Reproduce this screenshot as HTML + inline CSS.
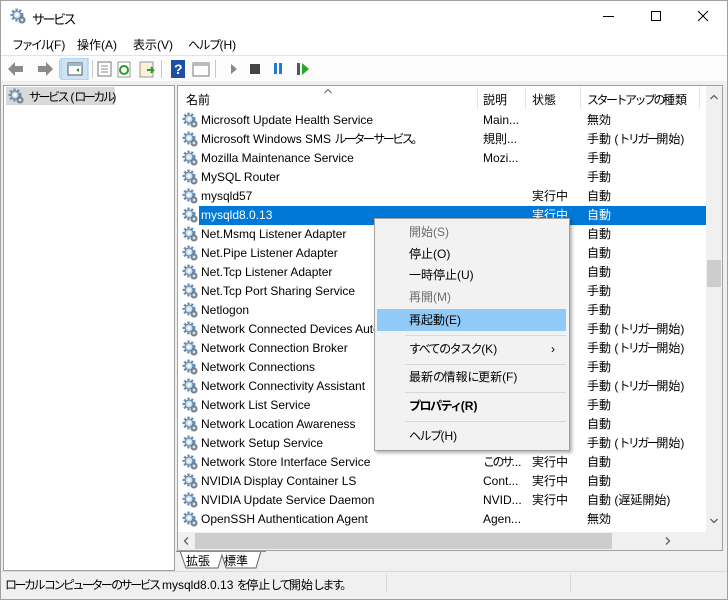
<!DOCTYPE html>
<html><head><meta charset="utf-8"><style>
*{margin:0;padding:0;box-sizing:border-box}
body{width:728px;height:600px;overflow:hidden;background:#f0f0f0;font-family:"Liberation Sans","Noto Sans CJK JP",sans-serif;font-size:12px;color:#000;position:relative}
.a{position:absolute;white-space:nowrap}
.row{position:absolute;left:179px;width:527px;height:19px;line-height:19px}
.row>span{position:absolute;top:0}
.n{left:22px}.d{left:304px}.s{left:353px}.t{left:408px}
.g{position:absolute;left:3px;top:1px}
.mi{position:absolute;left:409px;line-height:16px}
.sep{position:absolute;left:405px;width:161px;height:1px;background:#d7d7d7}
.dis{color:#6d6d6d}
.k{letter-spacing:-2.5px}
.k2{letter-spacing:-1.5px}
</style></head><body>
<svg width="0" height="0" style="position:absolute"><defs>
<g id="gear"><circle cx="7" cy="7" r="5.2" fill="none" stroke="#6a8fb5" stroke-width="2.6" stroke-dasharray="2.2 1.6"/><circle cx="7" cy="7" r="4" fill="#c8dbee" stroke="#5a7ea6" stroke-width="1"/><circle cx="7" cy="7" r="1.6" fill="#fff"/><circle cx="12" cy="12" r="3" fill="#8c9aa8" stroke="#6a7886" stroke-width="1"/><circle cx="12" cy="12" r="1" fill="#fff"/></g>
</defs></svg>
<div class="a" style="left:0;top:0;width:728px;height:600px;border:1px solid #a0a0a0"></div>
<div class="a" style="left:1px;top:1px;width:726px;height:54px;background:#fff"></div>
<svg class="a" style="left:10px;top:8px" width="18" height="18"><use href="#gear"/></svg>
<div class="a" style="left:32px;top:9px;font-size:13px"><span class="k">サービス</span></div>
<div class="a" style="left:603px;top:16px;width:11px;height:1px;background:#000"></div>
<div class="a" style="left:651px;top:11px;width:10px;height:10px;border:1px solid #000"></div>
<svg class="a" style="left:697px;top:10px" width="12" height="12"><path d="M1 1L11 11M11 1L1 11" stroke="#000" stroke-width="1"/></svg>
<div class="a" style="left:12px;top:36px"><span class="k">ファイル</span>(F)</div>
<div class="a" style="left:77px;top:36px">操作(A)</div>
<div class="a" style="left:133px;top:36px">表示(V)</div>
<div class="a" style="left:188px;top:36px"><span class="k2">ヘルプ</span>(H)</div>
<div class="a" style="left:1px;top:55px;width:726px;height:1px;background:#e3e3e3"></div>
<div class="a" style="left:1px;top:56px;width:726px;height:25px;background:#fcfcfc"></div>
<svg class="a" style="left:6px;top:58px" width="320" height="22">
<path d="M2 11L9 4V8H17V14H9V18Z" fill="#8a8a8a"/><path d="M47 11L40 4V8H32V14H40V18Z" fill="#8a8a8a"/>
<rect x="53" y="2" width="1" height="18" fill="#c8c8c8"/>
<rect x="55" y="0" width="27" height="22" fill="#cce4f7" stroke="#99c9ef"/>
<rect x="62" y="5" width="14" height="12" fill="#fff" stroke="#555"/><rect x="62" y="5" width="14" height="3" fill="#9cb6d3"/><path d="M73 10l-3 2 3 2z" fill="#2a8a2a"/>
<rect x="86" y="2" width="1" height="18" fill="#c8c8c8"/>
<rect x="92" y="4" width="13" height="14" fill="#fff" stroke="#777"/><path d="M95 8h7M95 11h7M95 14h7" stroke="#888"/>
<rect x="112" y="4" width="12" height="15" fill="#fff" stroke="#999"/><circle cx="118" cy="12" r="4" fill="none" stroke="#2c9a2c" stroke-width="2"/>
<rect x="134" y="4" width="13" height="15" fill="#f8f3d8" stroke="#999"/><path d="M141 12h6l-2-3M147 12l-2 3" stroke="#2c9a2c" stroke-width="2" fill="none"/>
<rect x="155" y="2" width="1" height="18" fill="#c8c8c8"/>
<rect x="165" y="2" width="14" height="18" fill="#1c4fa8"/><text x="168" y="16" fill="#fff" font-size="14" font-weight="bold" font-family="Liberation Sans">?</text>
<rect x="187" y="5" width="16" height="13" fill="#fff" stroke="#777"/><rect x="187" y="5" width="16" height="3" fill="#bbb"/>
<rect x="209" y="2" width="1" height="18" fill="#c8c8c8"/>
<path d="M225 6l6 5-6 5z" fill="#888"/>
<rect x="244" y="6" width="10" height="10" fill="#444"/>
<rect x="268" y="5" width="3" height="11" fill="#1e7bd6"/><rect x="273" y="5" width="3" height="11" fill="#1e7bd6"/>
<rect x="291" y="5" width="3" height="12" fill="#555"/><path d="M296 5l7 6-7 6z" fill="#28a828"/>
</svg>
<div class="a" style="left:3px;top:85px;width:172px;height:486px;background:#fff;border:1px solid #a0a0a0"></div>
<div class="a" style="left:6px;top:87px;width:109px;height:18px;background:#d9d9d9"></div>
<svg class="a" style="left:8px;top:88px" width="17" height="17"><use href="#gear"/></svg>
<div class="a" style="left:29px;top:88px"><span class="k">サービス</span> (<span class="k">ローカル</span>)</div>
<div class="a" style="left:177px;top:85px;width:546px;height:466px;background:#fff;border:1px solid #a0a0a0"></div>
<div class="a" style="left:186px;top:91px">名前</div>
<svg class="a" style="left:324px;top:88px" width="8" height="6"><path d="M0.5 5L4 1.5L7.5 5" stroke="#666" fill="none"/></svg>
<div class="a" style="left:477px;top:87px;width:1px;height:22px;background:#e5e5e5"></div>
<div class="a" style="left:525px;top:87px;width:1px;height:22px;background:#e5e5e5"></div>
<div class="a" style="left:580px;top:87px;width:1px;height:22px;background:#e5e5e5"></div>
<div class="a" style="left:699px;top:87px;width:1px;height:22px;background:#e5e5e5"></div>
<div class="a" style="left:483px;top:91px">説明</div>
<div class="a" style="left:532px;top:91px">状態</div>
<div class="a" style="left:587px;top:91px"><span class="k">スタートアップの</span>種類</div>
<div class="a" style="left:706px;top:86px;width:16px;height:446px;background:#f0f0f0"></div>
<svg class="a" style="left:710px;top:94px" width="8" height="6"><path d="M0.5 5L4 1.5L7.5 5" stroke="#606060" stroke-width="1.3" fill="none"/></svg>
<div class="a" style="left:707px;top:260px;width:14px;height:27px;background:#cdcdcd"></div>
<svg class="a" style="left:710px;top:518px" width="8" height="6"><path d="M0.5 1L4 4.5L7.5 1" stroke="#606060" stroke-width="1.3" fill="none"/></svg>
<div class="row" style="top:111px"><svg class="g" width="16" height="16"><use href="#gear"/></svg><span class="n">Microsoft Update Health Service</span><span class="d">Main...</span><span class="t">無効</span></div>
<div class="row" style="top:130px"><svg class="g" width="16" height="16"><use href="#gear"/></svg><span class="n">Microsoft Windows SMS <span class="k">ルーター サービス。</span></span><span class="d">規則...</span><span class="t">手動 (<span class="k">トリガー</span>開始)</span></div>
<div class="row" style="top:149px"><svg class="g" width="16" height="16"><use href="#gear"/></svg><span class="n">Mozilla Maintenance Service</span><span class="d">Mozi...</span><span class="t">手動</span></div>
<div class="row" style="top:168px"><svg class="g" width="16" height="16"><use href="#gear"/></svg><span class="n">MySQL Router</span><span class="t">手動</span></div>
<div class="row" style="top:187px"><svg class="g" width="16" height="16"><use href="#gear"/></svg><span class="n">mysqld57</span><span class="s">実行中</span><span class="t">自動</span></div>
<div class="a" style="left:199px;top:206px;width:507px;height:19px;background:#0078d7"></div>
<div class="row" style="top:206px;color:#fff"><svg class="g" width="16" height="16"><use href="#gear"/></svg><span class="n">mysqld8.0.13</span><span class="s">実行中</span><span class="t">自動</span></div>
<div class="row" style="top:225px"><svg class="g" width="16" height="16"><use href="#gear"/></svg><span class="n">Net.Msmq Listener Adapter</span><span class="t">自動</span></div>
<div class="row" style="top:244px"><svg class="g" width="16" height="16"><use href="#gear"/></svg><span class="n">Net.Pipe Listener Adapter</span><span class="t">自動</span></div>
<div class="row" style="top:263px"><svg class="g" width="16" height="16"><use href="#gear"/></svg><span class="n">Net.Tcp Listener Adapter</span><span class="t">自動</span></div>
<div class="row" style="top:282px"><svg class="g" width="16" height="16"><use href="#gear"/></svg><span class="n">Net.Tcp Port Sharing Service</span><span class="t">手動</span></div>
<div class="row" style="top:301px"><svg class="g" width="16" height="16"><use href="#gear"/></svg><span class="n">Netlogon</span><span class="t">手動</span></div>
<div class="row" style="top:320px"><svg class="g" width="16" height="16"><use href="#gear"/></svg><span class="n">Network Connected Devices Auto-Setup</span><span class="t">手動 (<span class="k">トリガー</span>開始)</span></div>
<div class="row" style="top:339px"><svg class="g" width="16" height="16"><use href="#gear"/></svg><span class="n">Network Connection Broker</span><span class="t">手動 (<span class="k">トリガー</span>開始)</span></div>
<div class="row" style="top:358px"><svg class="g" width="16" height="16"><use href="#gear"/></svg><span class="n">Network Connections</span><span class="t">手動</span></div>
<div class="row" style="top:377px"><svg class="g" width="16" height="16"><use href="#gear"/></svg><span class="n">Network Connectivity Assistant</span><span class="t">手動 (<span class="k">トリガー</span>開始)</span></div>
<div class="row" style="top:396px"><svg class="g" width="16" height="16"><use href="#gear"/></svg><span class="n">Network List Service</span><span class="t">手動</span></div>
<div class="row" style="top:415px"><svg class="g" width="16" height="16"><use href="#gear"/></svg><span class="n">Network Location Awareness</span><span class="t">自動</span></div>
<div class="row" style="top:434px"><svg class="g" width="16" height="16"><use href="#gear"/></svg><span class="n">Network Setup Service</span><span class="t">手動 (<span class="k">トリガー</span>開始)</span></div>
<div class="row" style="top:453px"><svg class="g" width="16" height="16"><use href="#gear"/></svg><span class="n">Network Store Interface Service</span><span class="d"><span class="k">このサ</span>...</span><span class="s">実行中</span><span class="t">自動</span></div>
<div class="row" style="top:472px"><svg class="g" width="16" height="16"><use href="#gear"/></svg><span class="n">NVIDIA Display Container LS</span><span class="d">Cont...</span><span class="s">実行中</span><span class="t">自動</span></div>
<div class="row" style="top:491px"><svg class="g" width="16" height="16"><use href="#gear"/></svg><span class="n">NVIDIA Update Service Daemon</span><span class="d">NVID...</span><span class="s">実行中</span><span class="t">自動 (遅延開始)</span></div>
<div class="row" style="top:510px"><svg class="g" width="16" height="16"><use href="#gear"/></svg><span class="n">OpenSSH Authentication Agent</span><span class="d">Agen...</span><span class="t">無効</span></div>
<div class="a" style="left:178px;top:532px;width:528px;height:18px;background:#f0f0f0"></div>
<svg class="a" style="left:183px;top:537px" width="6" height="8"><path d="M5 0.5L1.5 4L5 7.5" stroke="#606060" stroke-width="1.3" fill="none"/></svg>
<div class="a" style="left:195px;top:533px;width:417px;height:16px;background:#cdcdcd"></div>
<svg class="a" style="left:665px;top:537px" width="6" height="8"><path d="M1 0.5L4.5 4L1 7.5" stroke="#606060" stroke-width="1.3" fill="none"/></svg>
<div class="a" style="left:706px;top:532px;width:16px;height:18px;background:#f0f0f0"></div>
<svg class="a" style="left:176px;top:551px" width="90" height="20"><path d="M4 0L10 17H42L46 4L50 17H80L85 0" fill="#fff" stroke="#666"/><path d="M0 0.5H200" stroke="#888"/></svg>
<div class="a" style="left:186px;top:552px">拡張</div>
<div class="a" style="left:224px;top:552px">標準</div>
<div class="a" style="left:1px;top:571px;width:726px;height:1px;background:#dadada"></div>
<div class="a" style="left:386px;top:574px;width:1px;height:18px;background:#dadada"></div>
<div class="a" style="left:570px;top:574px;width:1px;height:18px;background:#dadada"></div>
<div class="a" style="left:5px;top:576px"><span class="k">ローカル コンピューター のサービス</span> mysqld8.0.13 <span class="k">を</span>停止<span class="k">して</span>開始<span class="k">します。</span></div>
<div class="a" style="left:374px;top:218px;width:196px;height:233px;background:#f2f2f2;border:1px solid #a0a0a0;box-shadow:2px 2px 3px rgba(0,0,0,.3)"></div>
<div class="a" style="left:377px;top:309px;width:189px;height:22px;background:#91c9f7"></div>
<div class="mi dis" style="top:224px">開始(S)</div>
<div class="mi" style="top:246px">停止(O)</div>
<div class="mi" style="top:267px">一時停止(U)</div>
<div class="mi dis" style="top:289px">再開(M)</div>
<div class="mi" style="top:312px">再起動(E)</div>
<div class="sep" style="top:335px"></div>
<div class="mi" style="top:341px"><span class="k2">すべてのタスク</span>(K)</div>
<div class="a" style="left:551px;top:341px;line-height:16px">›</div>
<div class="sep" style="top:364px"></div>
<div class="mi" style="top:369px">最新<span class="k2">の</span>情報<span class="k2">に</span>更新(F)</div>
<div class="sep" style="top:392px"></div>
<div class="mi" style="top:398px;font-weight:bold"><span class="k2">プロパティ</span>(R)</div>
<div class="sep" style="top:421px"></div>
<div class="mi" style="top:428px"><span class="k2">ヘルプ</span>(H)</div>
</body></html>
